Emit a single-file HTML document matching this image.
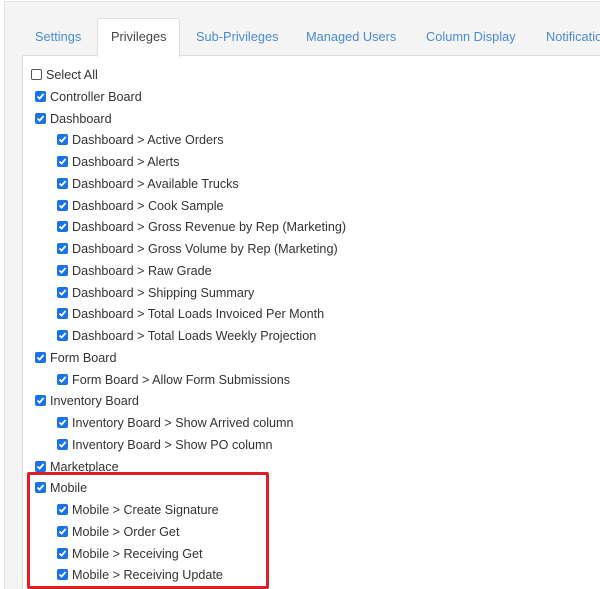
<!DOCTYPE html>
<html style="overflow:hidden;height:589px"><head><style>
body{margin:0;width:600px;height:589px;overflow:hidden;background:#fff;font-family:"Liberation Sans",sans-serif;position:relative;}
.outer{position:absolute;left:4px;top:1px;width:596px;height:588px;background:#f4f4f4;border-top:1px solid #e2e2e2;border-left:1px solid #e2e2e2;}
.tab{position:absolute;top:29px;font-size:12.8px;color:#4a8ad4;}
.act{position:absolute;left:97px;top:18px;width:81px;height:38px;background:#fff;border:1px solid #ddd;border-bottom:none;border-radius:3px 3px 0 0;}
.panel{position:absolute;left:22px;top:55px;width:578px;height:534px;background:#fff;border-top:1px solid #ddd;border-left:1px solid #ddd;}
.row{position:absolute;font-size:12.6px;color:#333;height:20px;line-height:20px;white-space:nowrap;}
.cb{position:absolute;top:4px;left:-15px;width:11px;height:11px;background:#1a73e8;border-radius:2px;}
.cb svg{position:absolute;left:1px;top:1px}
.ub{position:absolute;top:4px;left:-15px;width:9px;height:9px;border:1px solid #555;border-radius:2px;background:#fff}
.red{position:absolute;left:27px;top:472px;width:236px;height:111px;border:3px solid #e01e26;border-radius:2px;}
</style></head><body>
<div class="outer"></div>
<div class="panel"></div>
<div class="act"></div>
<div class="tab" style="left:35px">Settings</div>
<div class="tab" style="left:111px;color:#444">Privileges</div>
<div class="tab" style="left:196px">Sub-Privileges</div>
<div class="tab" style="left:306px">Managed Users</div>
<div class="tab" style="left:426px">Column Display</div>
<div class="tab" style="left:546px">Notifications</div>
<div id="list"></div>
<div class="red"></div>
<script>
var items=[[0,"Select All"],[1,"Controller Board"],[1,"Dashboard"],[2,"Dashboard > Active Orders"],[2,"Dashboard > Alerts"],[2,"Dashboard > Available Trucks"],[2,"Dashboard > Cook Sample"],[2,"Dashboard > Gross Revenue by Rep (Marketing)"],[2,"Dashboard > Gross Volume by Rep (Marketing)"],[2,"Dashboard > Raw Grade"],[2,"Dashboard > Shipping Summary"],[2,"Dashboard > Total Loads Invoiced Per Month"],[2,"Dashboard > Total Loads Weekly Projection"],[1,"Form Board"],[2,"Form Board > Allow Form Submissions"],[1,"Inventory Board"],[2,"Inventory Board > Show Arrived column"],[2,"Inventory Board > Show PO column"],[1,"Marketplace"],[1,"Mobile"],[2,"Mobile > Create Signature"],[2,"Mobile > Order Get"],[2,"Mobile > Receiving Get"],[2,"Mobile > Receiving Update"]];
var h="";
items.forEach(function(it,i){var x=it[0]==0?46:it[0]==1?50:72;var y=65+i*21.75;
var c=it[0]==0?'<span class="ub"></span>':'<span class="cb"><svg width="9" height="9" viewBox="0 0 9 9"><path d="M1.5 4.5L3.6 6.6L7.6 2" stroke="#fff" stroke-width="1.8" fill="none"/></svg></span>';
h+='<div class="row" style="left:'+x+'px;top:'+y+'px">'+c+it[1].replace(">","&gt;")+'</div>';});
document.getElementById("list").innerHTML=h;
</script>
</body></html>
